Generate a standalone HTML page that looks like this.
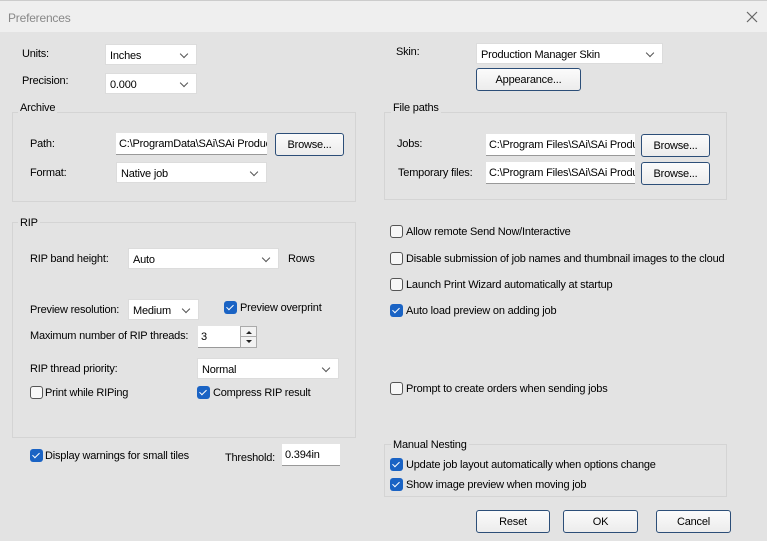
<!DOCTYPE html>
<html><head><meta charset="utf-8"><style>
*{box-sizing:border-box;margin:0;padding:0}
body{width:767px;height:541px;background:#e3e3e3;font-family:"Liberation Sans",sans-serif;font-size:11px;letter-spacing:-0.2px;color:#000;position:relative;overflow:hidden}
.a{position:absolute;white-space:nowrap;margin-top:1px}
.title{position:absolute;left:0;top:0;width:767px;height:32px;background:#efefef;border-top:1px solid #ccc}
.grp{position:absolute;border:1px solid #d4d4d4}
.gl{position:absolute;background:#e3e3e3;padding:0 2px;white-space:nowrap;margin-top:2px}
.cb{position:absolute;height:21px;background:#fff;border:1px solid #dcdcdc;padding:5px 4px 0;overflow:hidden;white-space:nowrap}
.cb:after{content:"";position:absolute;right:9px;top:6px;width:5px;height:5px;border-right:1px solid #555;border-bottom:1px solid #555;transform:rotate(45deg)}
.in{position:absolute;height:22px;background:#fff;border-bottom:1px solid #999;padding:5px 3px 0;overflow:hidden;white-space:nowrap}
.bt{position:absolute;height:23px;border:1px solid #2c4e78;border-radius:3px;background:linear-gradient(#fbfbfb,#ececec);text-align:center;line-height:22px}
.ck{position:absolute;width:13px;height:13px;border-radius:3px;background:#1a63c4}
.ck:after{content:"";position:absolute;left:4px;top:2px;width:3px;height:6px;border-right:1px solid #fff;border-bottom:1px solid #fff;transform:rotate(45deg)}
.ck.u{background:#f7f7f7;border:1px solid #555}
.ck.u:after{display:none}
</style></head><body>
<div class="title"></div>
<div class="a" style="left:8px;top:10px;color:#888;font-size:12px">Preferences</div>
<svg class="a" style="left:746px;top:10px" width="12" height="12"><path d="M1 1L11 11M11 1L1 11" stroke="#666" stroke-width="1.2"/></svg>

<div class="a" style="left:22px;top:47px">Units:</div>
<div class="cb" style="left:105px;top:44px;width:92px">Inches</div>
<div class="a" style="left:22px;top:74px">Precision:</div>
<div class="cb" style="left:105px;top:73px;width:92px">0.000</div>

<div class="grp" style="left:12px;top:112px;width:344px;height:90px"></div>
<div class="gl" style="left:18px;top:100px">Archive</div>
<div class="a" style="left:30px;top:137px">Path:</div>
<div class="in" style="left:116px;top:133px;width:151px">C:\ProgramData\SAi\SAi Production</div>
<div class="bt" style="left:275px;top:133px;width:69px">Browse...</div>
<div class="a" style="left:30px;top:166px">Format:</div>
<div class="cb" style="left:116px;top:162px;width:151px">Native job</div>

<div class="grp" style="left:12px;top:222px;width:344px;height:216px"></div>
<div class="gl" style="left:18px;top:215px">RIP</div>
<div class="a" style="left:30px;top:252px">RIP band height:</div>
<div class="cb" style="left:128px;top:248px;width:151px">Auto</div>
<div class="a" style="left:288px;top:252px">Rows</div>
<div class="a" style="left:30px;top:303px">Preview resolution:</div>
<div class="cb" style="left:128px;top:299px;width:71px">Medium</div>
<div class="ck" style="left:224px;top:301px"></div>
<div class="a" style="left:240px;top:301px">Preview overprint</div>
<div class="a" style="left:30px;top:329px">Maximum number of RIP threads:</div>
<div class="in" style="left:198px;top:326px;width:42px">3</div>
<div class="a" style="left:240px;top:325px;width:17px;height:22px;border:1px solid #aaa;background:#f2f2f2"></div>
<div class="a" style="left:240px;top:335px;width:17px;height:1px;background:#aaa"></div>
<svg class="a" style="left:244px;top:328px" width="10" height="16"><path d="M2 5L5 2L8 5Z M2 11L5 14L8 11Z" fill="#222"/></svg>
<div class="a" style="left:30px;top:362px">RIP thread priority:</div>
<div class="cb" style="left:197px;top:358px;width:142px">Normal</div>
<div class="ck u" style="left:30px;top:386px"></div>
<div class="a" style="left:45px;top:386px">Print while RIPing</div>
<div class="ck" style="left:197px;top:386px"></div>
<div class="a" style="left:213px;top:386px">Compress RIP result</div>

<div class="ck" style="left:30px;top:449px"></div>
<div class="a" style="left:45px;top:449px">Display warnings for small tiles</div>
<div class="a" style="left:225px;top:451px">Threshold:</div>
<div class="in" style="left:282px;top:444px;width:58px">0.394in</div>

<div class="a" style="left:396px;top:45px">Skin:</div>
<div class="cb" style="left:476px;top:43px;width:187px">Production Manager Skin</div>
<div class="bt" style="left:476px;top:68px;width:105px">Appearance...</div>

<div class="grp" style="left:384px;top:112px;width:343px;height:88px"></div>
<div class="gl" style="left:391px;top:100px">File paths</div>
<div class="a" style="left:397px;top:137px">Jobs:</div>
<div class="in" style="left:486px;top:134px;width:149px">C:\Program Files\SAi\SAi Production</div>
<div class="bt" style="left:641px;top:134px;width:69px">Browse...</div>
<div class="a" style="left:398px;top:166px">Temporary files:</div>
<div class="in" style="left:486px;top:162px;width:149px">C:\Program Files\SAi\SAi Production</div>
<div class="bt" style="left:641px;top:162px;width:69px">Browse...</div>

<div class="ck u" style="left:390px;top:225px"></div>
<div class="a" style="left:406px;top:225px">Allow remote Send Now/Interactive</div>
<div class="ck u" style="left:390px;top:252px"></div>
<div class="a" style="left:406px;top:252px">Disable submission of job names and thumbnail images to the cloud</div>
<div class="ck u" style="left:390px;top:278px"></div>
<div class="a" style="left:406px;top:278px">Launch Print Wizard automatically at startup</div>
<div class="ck" style="left:390px;top:304px"></div>
<div class="a" style="left:406px;top:304px">Auto load preview on adding job</div>
<div class="ck u" style="left:390px;top:382px"></div>
<div class="a" style="left:406px;top:382px">Prompt to create orders when sending jobs</div>

<div class="grp" style="left:384px;top:444px;width:343px;height:53px"></div>
<div class="gl" style="left:391px;top:437px">Manual Nesting</div>
<div class="ck" style="left:390px;top:458px"></div>
<div class="a" style="left:406px;top:458px">Update job layout automatically when options change</div>
<div class="ck" style="left:390px;top:478px"></div>
<div class="a" style="left:406px;top:478px">Show image preview when moving job</div>

<div class="bt" style="left:476px;top:510px;width:74px">Reset</div>
<div class="bt" style="left:563px;top:510px;width:75px">OK</div>
<div class="bt" style="left:656px;top:510px;width:75px">Cancel</div>
</body></html>
